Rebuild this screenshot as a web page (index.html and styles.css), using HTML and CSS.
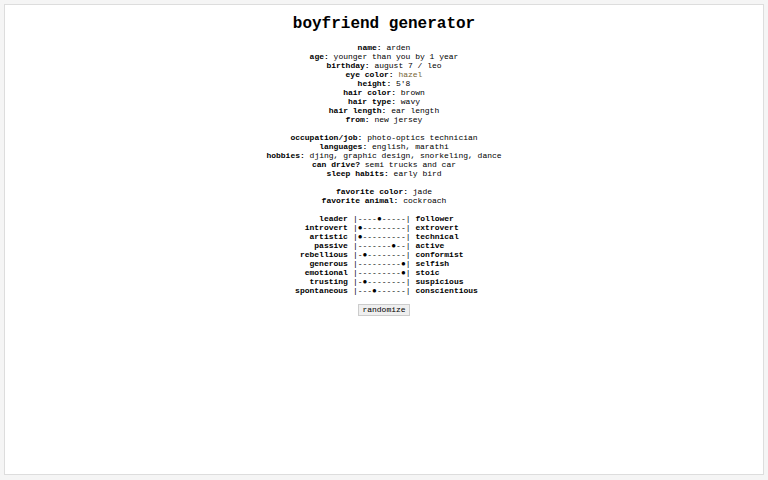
FILE: index.html
```html
<!DOCTYPE html>
<html lang="en">
<head>
<meta charset="utf-8">
<title>boyfriend generator</title>
<link rel="stylesheet" href="styles.css">
</head>
<body>
<main class="page">
  <h1 class="title">boyfriend generator</h1>
  <section class="group">
    <p><b>name:</b> arden</p>
    <p><b>age:</b> younger than you by 1 year</p>
    <p><b>birthday:</b> august 7 / leo</p>
    <p><b>eye color:</b> <span class="hazel">hazel</span></p>
    <p><b>height:</b> 5'8</p>
    <p><b>hair color:</b> brown</p>
    <p><b>hair type:</b> wavy</p>
    <p><b>hair length:</b> ear length</p>
    <p><b>from:</b> new jersey</p>
  </section>
  <section class="group">
    <p><b>occupation/job:</b> photo-optics technician</p>
    <p><b>languages:</b> english, marathi</p>
    <p><b>hobbies:</b> djing, graphic design, snorkeling, dance</p>
    <p><b>can drive?</b> semi trucks and car</p>
    <p><b>sleep habits:</b> early bird</p>
  </section>
  <section class="group">
    <p><b>favorite color:</b> jade</p>
    <p><b>favorite animal:</b> cockroach</p>
  </section>
  <table class="traits">
    <tr><th class="low">leader</th><td>|----●-----|</td><th>follower</th></tr>
    <tr><th class="low">introvert</th><td>|●---------|</td><th>extrovert</th></tr>
    <tr><th class="low">artistic</th><td>|●---------|</td><th>technical</th></tr>
    <tr><th class="low">passive</th><td>|-------●--|</td><th>active</th></tr>
    <tr><th class="low">rebellious</th><td>|-●--------|</td><th>conformist</th></tr>
    <tr><th class="low">generous</th><td>|---------●|</td><th>selfish</th></tr>
    <tr><th class="low">emotional</th><td>|---------●|</td><th>stoic</th></tr>
    <tr><th class="low">trusting</th><td>|-●--------|</td><th>suspicious</th></tr>
    <tr><th class="low">spontaneous</th><td>|---●------|</td><th>conscientious</th></tr>
  </table>
  <button class="randomize" type="button">randomize</button>
</main>
</body>
</html>
```
FILE: styles.css
```css
* {
  box-sizing: border-box;
}

body {
  display: flex;
  min-height: 100vh;
  margin: 0;
  padding: 4px 4px 5px;
  background: #f5f5f5;
  color: #000;
  font: 8px/9px "Liberation Mono", monospace;
}

.page {
  flex: 1;
  display: flex;
  flex-direction: column;
  align-items: center;
  padding: 10px;
  border: 1px solid #ddd;
  background: #fff;
  text-align: center;
}

.title {
  margin: 0 0 10px;
  font-size: 16px;
  line-height: 18px;
}

.group {
  margin-bottom: 9px;
}

.group p {
  margin: 0;
}

.hazel {
  color: #776536;
}

.traits {
  border-collapse: collapse;
  text-align: left;
}

.traits th,
.traits td {
  padding: 0 0 0 5px;
  white-space: nowrap;
}

.traits th {
  text-align: left;
}

.traits .low {
  text-align: right;
}

.randomize {
  margin-top: 9px;
  padding: 0 3px 1px;
  border: 1px solid #ccc;
  background: #efefef;
  color: #000;
  font: inherit;
}
```
